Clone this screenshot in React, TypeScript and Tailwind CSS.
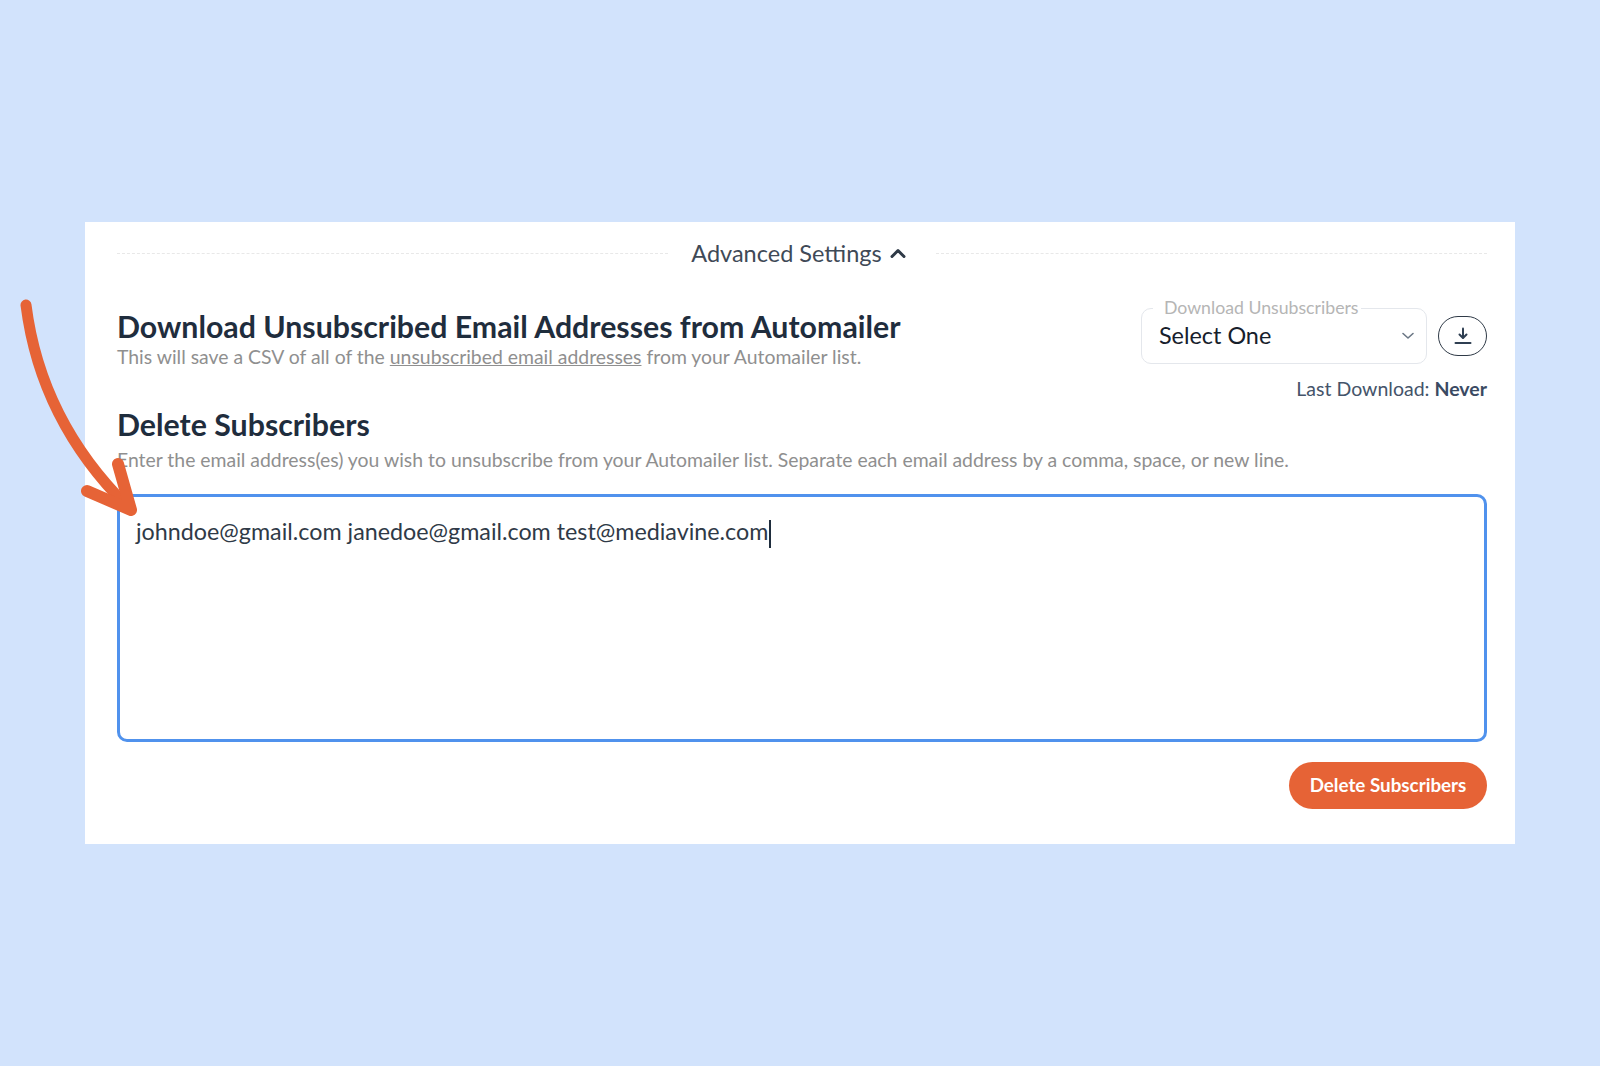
const font = { fontFamily: "Lato, sans-serif" };

function Arrow() {
  return (
    <svg className="absolute left-0 top-0" width="160" height="530" viewBox="0 0 160 530" fill="none">
      <path
        d="M26 305C34 368 60 440 128 507"
        stroke="#e66336"
        strokeWidth="11"
        strokeLinecap="round"
      />
      <path
        d="M118 464L131 510L87 491"
        stroke="#e66336"
        strokeWidth="12"
        strokeLinecap="round"
        strokeLinejoin="round"
      />
    </svg>
  );
}

function DownloadIcon() {
  return (
    <svg width="18" height="18" viewBox="0 0 18 18" fill="none" stroke="#2f3f52" strokeWidth="2" strokeLinecap="round" strokeLinejoin="round">
      <path d="M9 1.5V10.5" />
      <path d="M5.5 7.5L9 11L12.5 7.5" />
      <path d="M1.5 16H16.5" />
    </svg>
  );
}

export default function App() {
  return (
    <div className="relative min-h-[1066px] bg-[#d2e3fc] pt-[222px] overflow-hidden" style={font}>
      <div className="mx-[85px] h-[622px] bg-white pl-[32px] pr-[28px]">
        {/* Advanced Settings divider */}
        <div className="flex h-[63px] items-center">
          <div className="flex-1 border-t border-dashed border-[#e8e8e8]" />
          <div className="flex w-[268px] items-center justify-center gap-[8px] pr-[7px] text-[23.5px] text-[#3f4a57]">
            Advanced Settings
            <svg width="16" height="11" viewBox="0 0 16 11" fill="none" stroke="#2f3a47" strokeWidth="3" strokeLinecap="round" strokeLinejoin="round">
              <path d="M2 8.5L8 2.5L14 8.5" />
            </svg>
          </div>
          <div className="flex-1 border-t border-dashed border-[#e8e8e8]" />
        </div>

        {/* Download row */}
        <div className="flex justify-between">
          <div className="pt-[23px]">
            <h2 className="text-[30.3px] leading-[36px] font-bold text-[#1f2d3d]">
              Download Unsubscribed Email Addresses from Automailer
            </h2>
            <p className="mt-[1px] text-[19.4px] leading-[24px] text-[#8f8f8f]">
              This will save a CSV of all of the <span className="underline">unsubscribed email addresses</span> from your Automailer list.
            </p>
          </div>
          <div className="flex flex-col items-end pt-[23px]">
            <div className="flex items-center gap-[11px]">
              <div className="relative flex h-[56px] w-[286px] items-center justify-between rounded-[10px] border border-[#e4e7ec] pl-[17px] pr-[11px]">
                <span className="absolute -top-[11px] left-[11px] bg-white px-[11px] pr-[2px] text-[17.7px] leading-[20px] text-[#b5b5b5]">
                  Download Unsubscribers
                </span>
                <span className="pb-[1px] text-[23.4px] text-[#17202b]">Select One</span>
                <svg width="14" height="8" viewBox="0 0 14 8" fill="none" stroke="#6b7785" strokeWidth="1.6" strokeLinecap="round" strokeLinejoin="round">
                  <path d="M2 1.5L7 6L12 1.5" />
                </svg>
              </div>
              <button className="flex h-[40px] w-[49px] items-center justify-center rounded-full border-[1.5px] border-[#2f3a47] bg-white">
                <DownloadIcon />
              </button>
            </div>
            <p className="mt-[13px] text-[19.5px] leading-[24px] text-[#45546a]">
              Last Download: <span className="font-bold text-[#3a4a63]">Never</span>
            </p>
          </div>
        </div>

        {/* Delete subscribers */}
        <h2 className="mt-[5px] text-[30.3px] leading-[36px] font-bold text-[#1f2d3d]">Delete Subscribers</h2>
        <p className="mt-[6px] text-[19.4px] leading-[24px] text-[#8f8f8f]">
          Enter the email address(es) you wish to unsubscribe from your Automailer list. Separate each email address by a comma, space, or new line.
        </p>
        <div className="mt-[22px] h-[248px] rounded-[10px] border-[3px] border-[#5092ed] pl-[16px] pt-[18px] text-[23.3px] leading-[32px] text-[#2f3a47]">
          johndoe@gmail.com janedoe@gmail.com test@mediavine.com
          <span className="ml-[1px] inline-block h-[28px] w-[2px] bg-[#1f2d3d] align-middle" />
        </div>
        <div className="mt-[20px] flex justify-end">
          <button className="h-[47px] w-[198px] rounded-full bg-[#e66336] text-[18.8px] font-bold text-white">
            Delete Subscribers
          </button>
        </div>
      </div>
      <Arrow />
    </div>
  );
}
